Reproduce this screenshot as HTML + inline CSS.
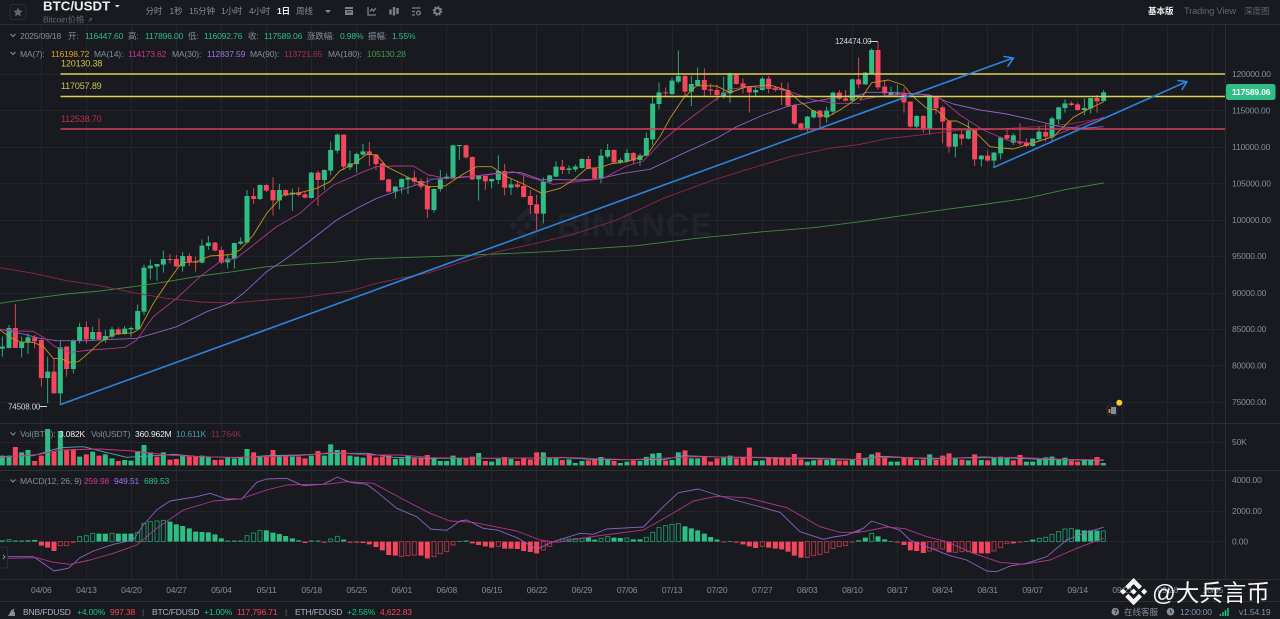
<!DOCTYPE html>
<html><head><meta charset="utf-8"><title>BTC/USDT</title>
<style>
html,body{margin:0;padding:0;background:#181a20;width:1280px;height:619px;overflow:hidden}
svg{display:block;position:absolute;left:0;top:0;filter:blur(.3px)}
text{font-family:"Liberation Sans","Noto Sans CJK SC",sans-serif;font-size:8.5px;letter-spacing:-.15px;fill:#848e9c}
.g{fill:#2ebd85}.w{fill:#eaecef}.d{fill:#5e6673}.y{fill:#d0c24a;font-size:9px}
.grid{stroke:#22252b;stroke-width:1;fill:none}
.sep{stroke:#2b2f36;stroke-width:1;fill:none}
.gw{stroke:#2ebd85;stroke-width:2.6;fill:none}.gb{stroke:#2ebd85;stroke-width:15;fill:none}
.rw{stroke:#f6465d;stroke-width:2.6;fill:none}.rb{stroke:#f6465d;stroke-width:15;fill:none}
.gh{stroke:#1f8a62;stroke-width:3;fill:none}.rh{stroke:#a83448;stroke-width:3;fill:none}
.l{fill:none;stroke-width:2.7;stroke-linejoin:round;stroke-linecap:round}
.m7{stroke:#c4951c}.m14{stroke:#b1368a}.m30{stroke:#8c62c4}.m90{stroke:#8b2a45}.m180{stroke:#3e8b3e}
.cy{stroke:#4aa6bd}.mg{stroke:#d0306f}
</style></head>
<body>
<svg width="1280" height="619" viewBox="0 0 1280 619" xmlns="http://www.w3.org/2000/svg">
<!-- watermark -->
<g transform="translate(509 207) scale(.29)" fill="#20232a"><path d="M38.73 53.2l24.59-24.58 24.6 24.6 14.3-14.31L63.32 0 24.43 38.9l14.3 14.3zM0 63.31l14.3-14.31 14.31 14.31-14.31 14.3zM38.73 73.41l24.59 24.59 24.6-24.6 14.31 14.29-38.9 38.91-38.91-38.88-.02-.02zM98 63.31l14.31-14.31 14.3 14.3-14.31 14.32zM77.83 63.3L63.32 48.78 52.59 59.51l-1.24 1.23-2.54 2.54 14.51 14.5 14.51-14.47z"/></g>
<text x="557" y="236" style="font-size:32.5px;font-weight:bold;fill:#20232a;letter-spacing:1.2px">BINANCE</text>
<!-- grid -->
<path class="grid" d="M41.5 25V579M86.5 25V579M131.5 25V579M176.5 25V579M221.5 25V579M266.5 25V579M311.5 25V579M356.5 25V579M401.5 25V579M446.5 25V579M491.5 25V579M536.5 25V579M582.5 25V579M627.5 25V579M672.5 25V579M717.5 25V579M762.5 25V579M807.5 25V579M852.5 25V579M897.5 25V579M942.5 25V579M987.5 25V579M1032.5 25V579M1077.5 25V579M1122.5 25V579M1167.5 25V579M1212.5 25V579"/>
<path class="grid" d="M0 74.5H1225M0 110.5H1225M0 147.5H1225M0 183.5H1225M0 220.5H1225M0 256.5H1225M0 293.5H1225M0 329.5H1225M0 365.5H1225M0 402.5H1225M0 442.5H1225M0 480.5H1225M0 511.5H1225M0 541.5H1225"/>
<!-- chrome lines -->
<path class="sep" d="M0 24.5H1280M0 423.5H1280M0 470.5H1280M0 579.5H1280M0 601.5H1280M1225.5 25V579"/>

<!-- candles 1 -->
<g transform="translate(0 130) scale(.33333)">
<path class="gw" d="M7 620V680M27 585V655M65 620V682M84 610V672M143 680V820M181 632V824M220 628V730M239 578V640M278 590V630M316 600V638M336 590V625M374 588V614M393 590V620M413 524V600M432 404V555M451 388V448M471 402V452M490 362V428M548 366V425M606 328V400M625 318V360M683 372V415M703 338V416M722 322V345M741 180V340M780 163V210M838 162V238M877 176V242M934 126V206M973 118V180M992 35V136M1012 10V70M1050 62V120M1070 68V128M1089 42V78M1186 168V205M1205 145V190M1224 140V192"/>
<path class="gb" d="M7 650V656M27 594V654M65 638V654M84 622V637M143 725V744M181 652V790M220 633V717M239 591V633M278 606V628M316 618V630M336 598V620M374 596V612M393 594V598M413 543V598M432 413V545M451 407V415M471 402V410M490 387V404M548 378V409M606 347V398M625 338V348M683 386V397M703 339V386M722 335V341M741 198V337M780 165V207M838 180V211M877 188V194M934 128V204M973 120V150M992 60V122M1012 14V62M1050 100V112M1070 72V102M1089 64V74M1186 170V185M1205 147V172M1224 143V149"/>
<path class="rw" d="M46 522V654M104 615V655M124 625V770M162 685V790M200 648V740M259 574V640M297 566V630M355 592V615M510 372V400M529 375V412M568 370V408M587 380V425M645 336V364M664 350V402M761 175V222M799 163V186M819 142V256M857 178V200M896 172V200M915 185V206M954 122V228M1031 14V120M1108 36V108M1128 72V120M1147 98V152M1166 146V188M1243 122V165M1263 145V178M1282 142V264"/>
<path class="rb" d="M46 594V654M104 622V634M124 630V744M162 725V790M200 650V717M259 591V628M297 606V628M355 598V612M510 387V390M529 387V409M568 378V396M587 394V398M645 338V362M664 360V398M761 198V207M799 165V182M819 180V211M857 180V196M896 187V195M915 193V203M954 128V150M1031 14V110M1108 64V74M1128 74V102M1147 100V150M1166 148V185M1243 143V155M1263 153V170M1282 168V238"/>
</g>
<!-- candles 2 -->
<g transform="translate(430 40) scale(.33333)">
<path class="gw" d="M12 445V518M31 390V455M50 400V418M69 314V418M88 315V360M146 408V482M185 415V445M205 346V432M243 415V465M340 412V550M359 404V428M378 364V412M417 376V402M436 374V395M456 355V385M513 327V430M533 312V355M571 354V372M591 327V368M630 340V378M649 278V348M668 170V315M687 128V208M726 112V165M745 32V130M784 108V198M803 82V140M881 110V175M900 98V188M977 142V170M997 110V152M1132 228V275M1151 210V235M1190 200V248M1209 155V225M1267 116V185"/>
<path class="gb" d="M12 447V510M31 418V447M50 410V416M69 316V416M88 315V318M146 408V418M185 417V424M205 393V420M243 433V443M340 425V521M359 406V425M378 380V410M417 385V390M436 380V388M456 357V384M513 347V416M533 330V350M571 360V367M591 339V364M630 346V360M649 294V346M668 191V298M687 157V192M726 122V162M745 108V125M784 132V155M803 120V136M881 158V168M900 100V160M977 150V157M997 116V150M1132 230V265M1151 212V232M1190 212V232M1209 158V215M1267 118V182"/>
<path class="rw" d="M108 314V356M127 350V420M166 405V450M224 372V466M262 422V445M281 403V473M301 450V522M320 465V570M397 360V402M475 348V388M494 384V420M552 328V370M610 336V372M707 142V172M765 105V170M823 85V168M842 130V165M861 135V182M919 100V134M939 115V160M958 138V218M1016 108V160M1036 138V155M1055 128V195M1074 128V198M1093 192V255M1113 248V272M1170 210V265M1228 150V180M1247 150V185M1286 52V145"/>
<path class="rb" d="M108 316V352M127 351V418M166 408V424M224 393V443M262 433V441M281 438V471M301 468V495M320 493V521M397 380V390M475 357V386M494 386V416M552 330V367M610 339V362M707 157V160M765 108V155M823 120V150M842 148V152M861 150V165M919 104V132M939 130V142M958 140V157M1016 116V147M1036 143V150M1055 145V150M1074 150V197M1093 195V251M1113 250V268M1170 212V232M1228 158V176M1247 175V182M1286 118V133"/>
</g>
<!-- candles 3 -->
<g transform="translate(820 30) scale(.33333)">
<path class="gw" d="M136 126V165M155 55V132M213 170V200M232 165V198M290 255V298M329 195V315M406 310V382M445 275V328M484 375V410M522 366V412M542 320V388M580 310V345M638 325V350M657 290V332M696 260V335M716 230V282M735 208V248M793 205V255M812 204V250M851 180V215"/>
<path class="gb" d="M136 128V163M155 60V130M213 188V196M232 190V195M290 258V290M329 200V296M406 312V350M445 298V326M484 377V388M522 368V392M542 323V370M580 316V338M638 326V348M657 305V328M696 265V322M716 232V268M735 220V234M793 234V240M812 204V236M851 187V213"/>
<path class="rw" d="M174 36V180M194 150V200M252 175V248M271 215V292M310 255V308M348 197V252M368 228V340M387 272V368M425 300V345M464 296V408M503 362V395M561 300V330M600 280V345M619 325V352M677 282V335M754 214V228M773 218V242M831 195V248"/>
<path class="rb" d="M174 60V172M194 170V190M252 190V217M271 215V290M310 258V296M348 200V235M368 232V275M387 275V350M425 313V326M464 298V388M503 377V392M561 315V326M600 336V340M619 338V348M677 306V320M754 220V225M773 223V240M831 204V214"/>
</g>

<!-- MAs -->
<g transform="translate(0 130) scale(.33333)">
<path class="l m180" d="M0 520L100 505 200 492 300 483 400 470 500 455 600 438 700 425 800 410 900 403 1000 397 1100 387 1200 383 1290 380"/>
<path class="l m90" d="M0 413L100 430 200 452 300 467 400 488 500 505 600 516 700 519 800 510 900 503 1000 490 1050 483 1130 460 1200 445 1290 428"/>
<path class="l m30" d="M0 598L60 610 120 625 170 632 260 632 340 628 410 625 470 608 530 590 620 545 690 520 730 490 800 425 860 385 920 340 1010 270 1080 230 1130 205 1200 180 1290 152"/>
<path class="l m14" d="M0 598L50 603 100 604 130 622 165 650 210 667 270 660 330 656 375 652 410 630 460 560 530 505 600 440 660 395 710 384 760 345 830 290 900 250 950 205 1000 165 1040 148 1090 125 1130 110 1190 108 1240 108 1290 138"/>
<path class="l m7" d="M0 600L30 622 60 636 100 637 130 650 160 685 185 686 205 697 235 695 265 670 300 637 340 613 400 608 420 595 460 520 500 460 545 398 590 395 630 378 690 374 720 360 760 315 800 250 850 195 900 188 950 175 990 155 1020 122 1060 102 1100 73 1130 75 1160 110 1210 135 1250 155 1290 172"/>
</g>
<g transform="translate(430 40) scale(.33333)">
<path class="l m180" d="M0 650L200 642 350 635 500 625 620 617 800 595 1000 575 1150 563 1290 545"/>
<path class="l m90" d="M0 697L100 665 200 636 330 607 430 583 560 540 700 475 850 420 930 395 1080 350 1200 325 1290 313"/>
<path class="l m30" d="M0 418L100 412 200 400 270 397 330 418 430 420 500 418 580 400 660 388 760 340 860 295 920 260 1000 225 1070 200 1150 185 1230 170 1290 165"/>
<path class="l m14" d="M0 405L50 416 100 410 170 405 250 395 300 412 370 433 440 425 520 415 590 378 640 363 700 300 760 250 830 198 900 148 960 140 1030 145 1080 155 1150 180 1220 190 1290 190"/>
<path class="l m7" d="M0 440L45 438 100 402 140 380 185 380 230 410 280 432 335 460 390 445 430 420 470 385 510 383 540 372 590 365 650 345 690 290 720 235 760 175 800 137 860 138 900 158 950 140 1020 135 1070 150 1110 185 1150 213 1190 232 1230 210 1290 170"/>
</g>
<g transform="translate(820 30) scale(.33333)">
<path class="l m180" d="M120 575L380 538 500 522 620 505 740 478 850 459"/>
<path class="l m90" d="M120 343L200 326 300 315 420 300 520 298 650 290 750 282 850 264"/>
<path class="l m30" d="M120 195L140 187 220 187 330 195 400 222 480 240 560 252 640 270 720 290 790 295 850 290"/>
<path class="l m14" d="M120 210L170 200 220 195 290 190 360 205 420 255 490 300 560 330 640 340 700 318 770 290 850 262"/>
<path class="l m7" d="M120 210L155 158 205 150 250 165 280 200 320 235 350 240 385 273 410 273 445 290 480 320 510 350 580 357 640 338 700 320 760 262 810 235 850 216"/>
</g>

<!-- horizontal lines -->
<path d="M60.5 74H1225M60.5 96.5H1225" stroke="#ddd04e" stroke-width="1.6" fill="none"/>
<path d="M60.5 129H1225" stroke="#d2405a" stroke-width="1.6" fill="none"/>
<!-- blue trend lines -->
<path d="M60.5 404.5L1013 58M1004 56.5L1013.5 58 1008 66M994 167.3L1186.5 81.7M1178 80.5L1187 81.7 1182 89.5" stroke="#2f83e0" stroke-width="1.6" fill="none" stroke-linecap="round" stroke-linejoin="round"/>

<!-- volume -->
<g transform="translate(0 425) scale(.33333)">
<path class="gb" d="M7 92V121M27 92V121M65 82V121M84 75V121M143 12V121M181 18V121M239 95V121M278 80V121M316 88V121M336 100V121M374 105V121M393 107V121M413 78V121M432 60V121M451 82V121M490 82V121M548 90V121M606 92V121M625 95V121M683 98V121M703 100V121M722 98V121M741 72V121M780 95V121M838 90V121M877 95V121M934 92V121M973 92V121M992 58V121M1012 75V121M1050 92V121M1070 95V121M1089 98V121M1186 102V121M1205 100V121M1224 92V121"/>
<path class="rb" d="M46 66V121M104 108V121M124 92V121M162 80V121M200 75V121M220 72V121M259 88V121M297 92V121M355 108V121M471 95V121M510 104V121M529 102V121M568 95V121M587 95V121M645 105V121M664 104V121M761 82V121M799 92V121M819 75V121M857 90V121M896 95V121M915 100V121M954 78V121M1031 75V121M1108 85V121M1128 97V121M1147 95V121M1166 92V121M1243 100V121M1263 98V121M1282 90V121"/>
<path class="l cy" d="M0 95L100 92 140 80 180 68 250 65 310 80 380 97 460 92 520 88 600 95 720 98 800 92 900 90 1000 85 1100 85 1180 97 1290 100"/>
<path class="l mg" d="M0 97L120 88 180 75 300 72 400 78 500 90 600 95 700 97 800 95 900 92 1000 82 1100 90 1200 90 1290 97"/>
</g>
<g transform="translate(430 425) scale(.33333)">
<path class="gb" d="M12 100V121M31 108V121M50 108V121M69 92V121M88 98V121M146 84V121M185 110V121M205 102V121M243 102V121M340 82V121M359 100V121M378 100V121M417 103V121M436 114V121M456 108V121M513 96V121M533 103V121M571 114V121M591 110V121M630 108V121M649 96V121M668 86V121M687 84V121M726 105V121M745 82V121M784 100V121M803 100V121M881 98V121M900 92V121M977 108V121M997 106V121M1132 110V121M1151 106V121M1190 105V121M1209 100V121M1267 105V121"/>
<path class="rb" d="M108 100V121M127 95V121M166 108V121M224 96V121M262 108V121M281 98V121M301 103V121M320 82V121M397 105V121M475 106V121M494 105V121M552 108V121M610 106V121M707 107V121M765 76V121M823 96V121M842 110V121M861 100V121M919 100V121M939 98V121M958 68V121M1016 98V121M1036 96V121M1055 97V121M1074 98V121M1093 87V121M1113 103V121M1170 104V121M1228 107V121M1247 107V121M1286 84V121"/>
<path class="l cy" d="M0 100L200 100 400 98 500 104 700 104 760 92 900 97 1100 100 1290 104"/>
<path class="l mg" d="M0 98L200 100 400 97 600 104 800 95 1000 97 1200 100 1290 104"/>
</g>
<g transform="translate(850 425) scale(.33333)">
<path class="gb" d="M46 100V121M65 88V121M123 110V121M142 110V121M200 105V121M239 88V121M316 100V121M355 106V121M394 105V121M432 98V121M452 95V121M471 100V121M529 110V121M548 110V121M568 104V121M587 97V121M606 95V121M626 104V121M645 98V121M703 106V121M722 106V121M760 114V121"/>
<path class="rb" d="M84 82V121M104 97V121M162 96V121M181 96V121M220 104V121M258 105V121M278 92V121M297 85V121M336 104V121M374 88V121M413 106V121M490 106V121M510 90V121M664 107V121M683 110V121M741 96V121"/>
<path class="l cy" d="M0 104L100 94 250 102 400 96 500 100 600 104 760 106"/>
<path class="l mg" d="M0 104L100 97 300 100 500 97 640 103 760 104"/>
</g>

<!-- MACD -->
<g transform="translate(0 425) scale(.33333)">
<path class="gb" d="M46 347V350M65 347V350M84 346V350M104 345V350M297 326V350M316 326V350M355 326V350M374 326V350M393 326V350M510 290V350M529 298V350M548 303V350M568 310V350M587 320V350M606 321V350M625 322V350M645 328V350M664 340V350M683 347V350M703 347V350M722 347V350M799 316V350M819 323V350M838 327V350M857 333V350M877 340V350M896 346V350M934 347V350M954 347V350M1031 344V350"/>
<path class="rb" d="M124 362V350M143 368V350M162 378V350M915 354V350M973 353V350M1050 353V350M1070 353V350M1089 354V350M1108 358V350M1128 366V350M1147 376V350M1166 390V350M1186 392V350M1263 392V350M1282 400V350"/>
<path class="gh" d="M1 347h12V350h-12zM21 344h12V350h-12zM233 335h12V350h-12zM253 332h12V350h-12zM272 325h12V350h-12zM330 325h12V350h-12zM407 322h12V350h-12zM426 295h12V350h-12zM445 290h12V350h-12zM465 288h12V350h-12zM484 286h12V350h-12zM735 332h12V350h-12zM755 324h12V350h-12zM774 316h12V350h-12zM986 342h12V350h-12zM1006 334h12V350h-12z"/>
<path class="rh" d="M175 362h12V350h-12zM194 362h12V350h-12zM214 352h12V350h-12zM1199 394h12V350h-12zM1218 392h12V350h-12zM1237 390h12V350h-12z"/>
<path class="l m30" d="M22 395L100 395 130 415 162 438 205 430 240 398 280 378 340 358 400 345 430 300 470 255 510 228 590 215 630 205 680 222 725 222 770 172 800 162 860 160 910 182 970 178 1012 156 1050 172 1100 178 1130 200 1190 250 1250 275 1290 310"/>
<path class="l m14" d="M22 400L110 398 160 412 210 418 270 405 340 385 410 360 470 310 550 255 640 228 720 222 800 195 860 180 920 178 980 178 1040 170 1120 175 1200 218 1290 265"/>
</g>
<g transform="translate(430 425) scale(.33333)">
<path class="gb" d="M88 348V350M108 347V350M475 338V350M494 344V350M552 338V350M571 339V350M610 343V350M630 343V350M765 304V350M784 310V350M803 316V350M823 326V350M842 336V350M861 344V350M900 348V350M1286 346V350"/>
<path class="rb" d="M127 355V350M146 360V350M166 364V350M185 368V350M224 371V350M243 371V350M262 372V350M281 378V350M301 381V350M320 385V350M378 352V350M881 352V350M919 353V350M939 358V350M958 364V350M977 369V350M1016 368V350M1036 371V350M1055 373V350M1074 380V350M1093 392V350M1113 398V350M1267 352V350"/>
<path class="gh" d="M391 342h12V350h-12zM411 342h12V350h-12zM430 341h12V350h-12zM450 340h12V350h-12zM507 340h12V350h-12zM527 335h12V350h-12zM585 339h12V350h-12zM643 337h12V350h-12zM662 322h12V350h-12zM681 308h12V350h-12zM701 302h12V350h-12zM720 298h12V350h-12zM739 296h12V350h-12z"/>
<path class="rh" d="M6 395h12V350h-12zM25 386h12V350h-12zM44 380h12V350h-12zM63 360h12V350h-12zM199 364h12V350h-12zM334 375h12V350h-12zM353 364h12V350h-12zM991 364h12V350h-12zM1126 397h12V350h-12zM1145 392h12V350h-12zM1164 388h12V350h-12zM1184 382h12V350h-12zM1203 370h12V350h-12zM1222 364h12V350h-12zM1241 362h12V350h-12z"/>
<path class="l m30" d="M0 312L50 316 90 288 110 285 160 310 205 316 265 340 320 373 370 350 450 325 490 328 530 312 640 306 700 245 745 203 805 192 880 216 970 240 1050 262 1110 320 1180 343 1210 336 1250 330 1290 316"/>
<path class="l m14" d="M0 265L60 288 130 292 260 318 330 345 380 352 500 333 640 315 720 270 790 228 860 214 950 218 1070 248 1170 305 1230 322 1290 322"/>
</g>
<g transform="translate(850 425) scale(.33333)">
<path class="gb" d="M46 338V350M84 334V350M104 343V350M123 348V350M529 348V350M548 344V350M683 314V350M703 316V350M722 316V350M741 317V350"/>
<path class="rb" d="M142 353V350M162 360V350M181 376V350M200 378V350M220 384V350M297 382V350M374 385V350M394 385V350M413 385V350M490 355V350M510 352V350"/>
<path class="gh" d="M59 325h12V350h-12zM562 340h12V350h-12zM581 337h12V350h-12zM600 328h12V350h-12zM620 320h12V350h-12zM639 312h12V350h-12zM658 311h12V350h-12zM754 318h12V350h-12z"/>
<path class="rh" d="M233 378h12V350h-12zM252 372h12V350h-12zM272 372h12V350h-12zM310 382h12V350h-12zM330 380h12V350h-12zM349 380h12V350h-12zM426 378h12V350h-12zM446 368h12V350h-12zM465 356h12V350h-12z"/>
<path class="l m30" d="M0 326L40 310 65 288 110 303 150 316 180 345 230 365 300 392 350 405 410 438 440 440 480 423 530 415 590 395 650 345 710 322 760 307"/>
<path class="l m14" d="M0 325L50 318 110 306 165 311 230 335 290 350 370 385 450 412 520 418 600 405 680 370 760 340"/>
</g>

<!-- left handle -->
<rect x="-2" y="547" width="9.5" height="21" rx="2" fill="#181a20" stroke="#2b2f36"/>
<path d="M3 555l2 2-2 2" stroke="#848e9c" fill="none"/>

<!-- header -->
<rect x="10" y="4.500" width="16" height="15" rx="3" fill="none" stroke="#2b2f36"/>
<path d="M18 7.500l1.400 3 3.200.4-2.300 2.200.6 3.200-2.900-1.600-2.900 1.600.6-3.200-2.300-2.200 3.200-.4z" fill="#5e6673"/>
<text x="43" y="10.500" style="font-size:13.300px;font-weight:bold;fill:#eaecef;letter-spacing:0">BTC/USDT</text>
<path d="M115 5h4.500l-2.250 2.500z" fill="#eaecef"/>
<text x="43" y="22.500" class="d" style="font-size:8.500px">Bitcoin价格</text>
<path d="M88.500 21.500l3-3M89.500 18.500h2v2" stroke="#5e6673" fill="none" stroke-width=".8"/>
<g style="letter-spacing:0">
<text x="145.500" y="14">分时</text><text x="169.500" y="14">1秒</text><text x="189" y="14">15分钟</text><text x="221" y="14">1小时</text><text x="249" y="14">4小时</text><text x="277" y="14" style="fill:#eaecef;font-weight:bold">1日</text><text x="296" y="14">周线</text>
</g>
<path d="M325 10h6l-3 3z" fill="#848e9c"/>
<!-- toolbar icons -->
<path d="M345 7h8v8h-8z" fill="#7a828e"/><path d="M345 9.500h8M346.500 12h5" stroke="#181a20"/>
<path d="M368 7v8h8M370 11.500l2-2.500 1.500 2 2.500-3" stroke="#7a828e" fill="none" stroke-width="1.300"/>
<path d="M390.500 9.500v5M394 7v8.500M397.500 8v6" stroke="#7a828e" stroke-width="2.400"/>
<path d="M412 8h8.500M412 11.500h3M412 15h3" stroke="#7a828e" stroke-width="1.200"/><circle cx="418.500" cy="13" r="1.900" fill="none" stroke="#7a828e" stroke-width="1.200"/>
<circle cx="437.500" cy="11" r="2.900" fill="none" stroke="#7a828e" stroke-width="2"/><circle cx="437.500" cy="11" r="4.300" fill="none" stroke="#7a828e" stroke-width="1.200" stroke-dasharray="1.800 1.570"/>
<text x="1148" y="14" style="fill:#eaecef;font-weight:bold;letter-spacing:0">基本版</text>
<text x="1184" y="14" class="d" style="font-size:9.300px">Trading View</text>
<text x="1244" y="14" class="d" style="letter-spacing:0">深度图</text>

<!-- info row -->
<path d="M10.500 34l2.500 2.500 2.500-2.500M10.500 52l2.500 2.500 2.500-2.500M10.500 432.500l2.500 2.500 2.500-2.500M10.500 479.500l2.500 2.500 2.500-2.500" stroke="#848e9c" fill="none" stroke-width="1.100"/>
<text x="20" y="39">2025/09/18</text><text x="68" y="39">开:</text><text x="85" y="39" class="g">116447.60</text><text x="128" y="39">高:</text><text x="145" y="39" class="g">117896.00</text><text x="188" y="39">低:</text><text x="204" y="39" class="g">116092.76</text><text x="248" y="39">收:</text><text x="264" y="39" class="g">117589.06</text><text x="307" y="39">涨跌幅:</text><text x="340" y="39" class="g">0.98%</text><text x="368" y="39">振幅:</text><text x="392" y="39" class="g">1.55%</text>
<text x="20" y="57">MA(7):</text><text x="51" y="57" style="fill:#dba51c">116198.72</text><text x="94" y="57">MA(14):</text><text x="128" y="57" style="fill:#c9368f">114173.62</text><text x="172" y="57">MA(30):</text><text x="207" y="57" style="fill:#a070e8">112837.59</text><text x="250" y="57">MA(90):</text><text x="284" y="57" style="fill:#a8304a">113721.65</text><text x="328" y="57">MA(180):</text><text x="367" y="57" style="fill:#3f9c3f">105130.28</text>
<text x="61" y="66.500" class="y">120130.38</text><text x="61" y="89" class="y">117057.89</text><text x="61" y="122" style="fill:#b8304a;font-size:9px">112538.70</text>

<!-- high/low -->
<text x="8" y="409.500" style="fill:#d0d4da;font-size:8px">74508.00</text><path d="M39 406.500h8" stroke="#d0d4da"/>
<text x="835" y="44" style="fill:#d0d4da;font-size:8px">124474.00</text><path d="M869 41.500h9" stroke="#d0d4da"/>

<!-- note icon -->
<rect x="1107" y="406" width="10" height="9" rx="1.500" fill="none" stroke="#2b2f36"/><rect x="1111" y="407" width="5" height="7" fill="#848e9c"/><rect x="1108.500" y="409" width="2" height="4" fill="#d08a20"/>
<circle cx="1119.300" cy="402.700" r="3" fill="#f5cb2e"/>

<!-- axis -->
<g><text x="1232" y="77">120000.00</text><text x="1232" y="113.500">115000.00</text><text x="1232" y="150">110000.00</text><text x="1232" y="186.500">105000.00</text><text x="1232" y="223">100000.00</text><text x="1232" y="259">95000.00</text><text x="1232" y="296">90000.00</text><text x="1232" y="332">85000.00</text><text x="1232" y="368.500">80000.00</text><text x="1232" y="405">75000.00</text><text x="1232" y="445">50K</text><text x="1232" y="483">4000.00</text><text x="1232" y="514">2000.00</text><text x="1232" y="544.500">0.00</text></g>
<rect x="1226" y="84" width="49.500" height="16" rx="2.500" fill="#2ebd85"/>
<text x="1232" y="95" style="fill:#fff;font-weight:bold">117589.06</text>

<!-- vol/macd legend -->
<text x="20" y="437">Vol(BTC):</text><text x="59" y="437" class="w">3.082K</text><text x="91" y="437">Vol(USDT)</text><text x="135" y="437" class="w">360.962M</text><text x="176" y="437" style="fill:#4a9cb0">10.611K</text><text x="211" y="437" style="fill:#8f2e45">11.764K</text>
<text x="20" y="484">MACD(12, 26, 9)</text><text x="84" y="484" style="fill:#c9368f">259.98</text><text x="114" y="484" style="fill:#a070e8">949.51</text><text x="144" y="484" class="g">689.53</text>

<!-- dates -->
<g text-anchor="middle"><text x="41.300" y="593">04/06</text><text x="86.400" y="593">04/13</text><text x="131.400" y="593">04/20</text><text x="176.500" y="593">04/27</text><text x="221.500" y="593">05/04</text><text x="266.600" y="593">05/11</text><text x="311.700" y="593">05/18</text><text x="356.700" y="593">05/25</text><text x="401.800" y="593">06/01</text><text x="446.800" y="593">06/08</text><text x="491.900" y="593">06/15</text><text x="537" y="593">06/22</text><text x="582" y="593">06/29</text><text x="627.100" y="593">07/06</text><text x="672.100" y="593">07/13</text><text x="717.200" y="593">07/20</text><text x="762.300" y="593">07/27</text><text x="807.300" y="593">08/03</text><text x="852.400" y="593">08/10</text><text x="897.400" y="593">08/17</text><text x="942.500" y="593">08/24</text><text x="987.600" y="593">08/31</text><text x="1032.600" y="593">09/07</text><text x="1077.700" y="593">09/14</text><text x="1122.700" y="593">09/21</text><text x="1167.800" y="593">09/28</text><text x="1212.900" y="593">10/05</text></g>

<!-- bottom bar -->
<path d="M8 616l3.500-6 3-1.500-1 3 1.500 1v3.500z" fill="#848e9c"/>
<g><text x="23" y="615" style="fill:#aab4c8">BNB/FDUSD</text><text x="77" y="615" style="fill:#0ecb81">+4.00%</text><text x="110" y="615" style="fill:#f6465d">997.38</text><text x="142" y="615" class="d">|</text><text x="152" y="615" style="fill:#aab4c8">BTC/FDUSD</text><text x="204" y="615" style="fill:#0ecb81">+1.00%</text><text x="237" y="615" style="fill:#f6465d">117,796.71</text><text x="285" y="615" class="d">|</text><text x="295" y="615" style="fill:#aab4c8">ETH/FDUSD</text><text x="347" y="615" style="fill:#0ecb81">+2.56%</text><text x="380" y="615" style="fill:#f6465d">4,622.83</text></g>
<circle cx="1115.300" cy="611.700" r="3.800" fill="#848e9c"/><text x="1113.700" y="614.200" style="fill:#181a20;font-size:6.500px;font-weight:bold">?</text>
<text x="1124" y="615" style="letter-spacing:0">在线客服</text>
<circle cx="1170.500" cy="611.700" r="3.800" fill="#848e9c"/><path d="M1170.500 609.500v2.300l1.600 1" stroke="#181a20" fill="none" stroke-width=".8"/>
<text x="1180" y="615" style="fill:#7f96b3">12:00:00</text>
<path d="M1220.500 616v-2M1223 616v-4M1225.500 616v-6M1228 616v-8" stroke="#0ecb81" stroke-width="1.500"/>
<text x="1239" y="615" style="fill:#7f96b3">v1.54.19</text>

<!-- author watermark -->
<g transform="translate(1120 578) scale(.215)" fill="#f4f4f4"><path d="M38.730 53.200l24.590-24.580 24.600 24.600 14.300-14.310L63.320 0 24.430 38.900l14.300 14.300zM0 63.310l14.300-14.310 14.310 14.310-14.310 14.300zM38.730 73.410l24.590 24.590 24.600-24.600 14.310 14.290-38.900 38.910-38.910-38.880-.020-.020zM98 63.310l14.310-14.310 14.300 14.300-14.310 14.320zM77.830 63.300L63.320 48.780 52.590 59.510l-1.240 1.230-2.540 2.540 14.510 14.500 14.510-14.470z"/></g>
<text x="1152" y="601" style="font-size:23.500px;fill:#f7f7f7;letter-spacing:0;font-family:'Liberation Sans','WenQuanYi Zen Hei','Noto Sans CJK SC',sans-serif">@大兵言币</text>
</svg>
</body></html>
